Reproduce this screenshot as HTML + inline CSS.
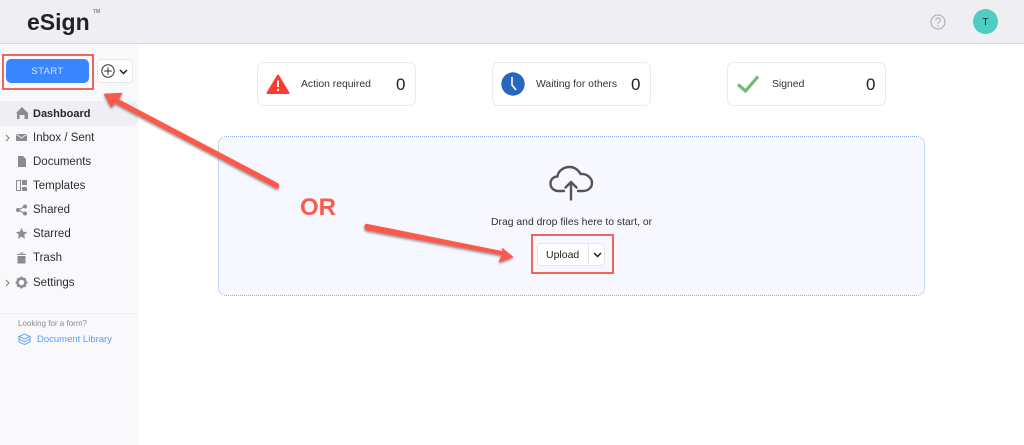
<!DOCTYPE html>
<html><head><meta charset="utf-8"><style>
html,body{margin:0;padding:0;width:1024px;height:445px;overflow:hidden;background:#fff;font-family:"Liberation Sans",sans-serif;color:#222}
div,span{position:absolute;white-space:nowrap;box-sizing:border-box}
svg{position:absolute;overflow:visible}
.n{left:33px;font-size:11.5px;line-height:16px;color:#2d2d33}
.card{top:62px;width:159px;height:44px;border:1px solid #ececf0;border-radius:6px;background:#fff}
.lab{font-size:10.4px;line-height:14px;color:#333;top:78px}
.num{font-size:17px;line-height:20px;color:#222;top:75px}
</style></head><body>
<div style="left:0;top:0;width:1024px;height:44px;background:#eeeef3;border-bottom:1px solid #d9d9de"></div>
<div style="left:27px;top:6px;font-size:23px;line-height:32px;font-weight:bold;color:#222">eSign</div>
<div style="left:93px;top:9px;font-size:5px;line-height:7px;color:#555">TM</div>
<svg style="left:930px;top:14px" width="16" height="16" viewBox="0 0 16 16"><circle cx="8" cy="8" r="7" fill="none" stroke="#a8a8ac" stroke-width="1"/><path d="M5.8 6.2a2.2 2.2 0 1 1 3.4 1.8c-.8.5-1.2 1-1.2 1.8" fill="none" stroke="#a8a8ac" stroke-width="1"/><circle cx="8" cy="12" r=".7" fill="#a8a8ac"/></svg>
<div style="left:973px;top:9px;width:25px;height:25px;border-radius:50%;background:#4ecdc4;text-align:center;font-size:10px;line-height:27px;color:#222">T</div>

<div style="left:0;top:44px;width:138px;height:401px;background:#f9f9fc"></div>
<div style="left:0;top:101px;width:138px;height:25px;background:#efeff3;border-radius:0 6px 6px 0"></div>
<div style="left:6px;top:59px;width:83px;height:24px;background:#3a86ff;border-radius:5px;text-align:center;color:#cfe0fb;font-size:9.500px;line-height:26px;letter-spacing:.4px">START</div>
<div style="left:2px;top:54px;width:92px;height:36px;border:2px solid #f0645a"></div>
<div style="left:97px;top:59px;width:36px;height:24px;background:#fff;border:1px solid #e8e8ec;border-radius:4px"></div>
<svg style="left:101px;top:64px" width="14" height="14" viewBox="0 0 14 14"><circle cx="7" cy="7" r="6.2" fill="none" stroke="#333" stroke-width="1"/><path d="M7 3.2v7.6M3.2 7h7.6" stroke="#333" stroke-width="1"/></svg>
<svg style="left:119px;top:69px" width="9" height="6" viewBox="0 0 9 6"><path d="M1 1l3.5 3.5L8 1" fill="none" stroke="#222" stroke-width="1.5"/></svg>

<div class="n" style="top:106px;font-weight:bold;font-size:11px;color:#26262b">Dashboard</div>
<div class="n" style="top:130px">Inbox / Sent</div>
<div class="n" style="top:154px">Documents</div>
<div class="n" style="top:178px">Templates</div>
<div class="n" style="top:202px">Shared</div>
<div class="n" style="top:226px">Starred</div>
<div class="n" style="top:250px">Trash</div>
<div class="n" style="top:275px">Settings</div>

<svg style="left:0;top:0" width="32" height="300" viewBox="0 0 32 300" fill="#8c8c90">
<path d="M16 114l6-6 6 6v6h-3.500v-4h-5v4H17v-6z" transform="translate(0 -1)"/>
<path d="M6 135l3 3-3 3M6 280l3 3-3 3" fill="none" stroke="#777" stroke-width=".9"/>
<rect x="16" y="134" width="11" height="7" rx="1"/><path d="M16.500 134.500l5 3.500 5-3.500" stroke="#f9f9fc" stroke-width=".8" fill="none"/>
<path d="M18 156h5l3 3v8h-8z"/>
<path d="M16 180h5v11h-5z M17 181v9h3v-9z M22 180h5v5h-5z M22 187h5v4h-5z" fill-rule="evenodd"/>
<circle cx="18" cy="210" r="2"/><circle cx="25" cy="206.500" r="2"/><circle cx="25" cy="213.500" r="2"/><path d="M18 210l7-3.500M18 210l7 3.500" stroke="#8c8c90"/>
<path d="M21.500 228l1.700 3.600 3.900.5-2.900 2.700.8 3.900-3.500-2-3.500 2 .8-3.900-2.900-2.700 3.900-.5z"/>
<path d="M17 254h9v1h-9z M19.500 252.500h4v1h-4z M17.500 256h8v7.500h-8z"/>
<circle cx="21.500" cy="282.500" r="4" fill="none" stroke="#8c8c90" stroke-width="2.500"/><path d="M21.500 276.500v2M21.500 286.500v2M15.500 282.500h2M25.500 282.500h2M17.300 278.300l1.400 1.400M24.300 285.300l1.400 1.400M17.300 286.700l1.400-1.400M24.300 279.700l1.400-1.400" stroke="#8c8c90" stroke-width="1.800"/>
</svg>

<div style="left:0;top:313px;width:138px;height:1px;background:#eeeef2"></div>
<div style="left:18px;top:318px;font-size:8px;line-height:11px;color:#8a8a90">Looking for a form?</div>
<div style="left:37px;top:333px;font-size:9.500px;line-height:13px;color:#5b9bf5">Document Library</div>
<svg style="left:18px;top:333px" width="13" height="13" viewBox="0 0 13 13" fill="none" stroke="#6aa5f7" stroke-width="1"><path d="M6.500 1l5.500 2.500-5.500 2.500L1 3.500z"/><path d="M1 6.200l5.500 2.500L12 6.200M1 9l5.500 2.500L12 9"/><path d="M1 3.500V9M12 3.500V9"/></svg>

<div class="card" style="left:257px"></div>
<svg style="left:266px;top:74px" width="24" height="20" viewBox="0 0 24 20"><path d="M12 1.500L22.500 19h-21z" fill="#ff3b30" stroke="#ff3b30" stroke-width="2" stroke-linejoin="round"/><path d="M12 6.500v6.500" stroke="#fff" stroke-width="2"/><circle cx="12" cy="16" r="1.200" fill="#fff"/></svg>
<div class="lab" style="left:301px">Action required</div>
<div class="num" style="left:396px">0</div>

<div class="card" style="left:492px"></div>
<svg style="left:501px;top:72px" width="24" height="24" viewBox="0 0 24 24"><circle cx="12" cy="12" r="11.700" fill="#2a66bd"/><path d="M11 5v8l4 5" fill="none" stroke="#fff" stroke-width="1.600"/></svg>
<div class="lab" style="left:536px">Waiting for others</div>
<div class="num" style="left:631px">0</div>

<div class="card" style="left:727px"></div>
<svg style="left:736px;top:74px" width="24" height="20" viewBox="0 0 24 20"><path d="M2 10.500l7.500 6.500L22 2.500" fill="none" stroke="#6fbb78" stroke-width="3.200"/></svg>
<div class="lab" style="left:772px">Signed</div>
<div class="num" style="left:866px">0</div>

<div style="left:218px;top:136px;width:707px;height:160px;background:#f7f8ff;border:1px dotted #8fb4f0;border-radius:8px"></div>
<svg style="left:549px;top:165px" width="45" height="36" viewBox="0 0 45 36" fill="none" stroke="#545458" stroke-width="2.400" stroke-linecap="round" stroke-linejoin="round"><path d="M15 26H9.500C4.500 26 1.500 22.500 1.500 18.500 1.500 14.500 4.500 11.500 8.500 11.500 9 6 14.500 2 20.500 2c5 0 9 3 11 7 6.500-.5 11.500 4 11.500 9S38.500 26 34 26h-5"/><path d="M22 34.500V17M16.500 22.500l5.500-5.500 5.500 5.500"/></svg>
<div style="left:491px;top:216px;font-size:10.400px;line-height:14px;color:#2f2f33">Drag and drop files here to start, or</div>
<div style="left:537px;top:243px;width:68px;height:23px;background:#fff;border:1px solid #e6e6ea;border-radius:4px"></div>
<div style="left:588px;top:243px;width:1px;height:23px;background:#e6e6ea"></div>
<div style="left:546px;top:247.500px;font-size:10.500px;line-height:15px;color:#222">Upload</div>
<svg style="left:593px;top:252px" width="9" height="6" viewBox="0 0 9 6"><path d="M1 1l3.500 3.500L8 1" fill="none" stroke="#222" stroke-width="1.500"/></svg>
<div style="left:531px;top:234px;width:83px;height:40px;border:2px solid #f0645a"></div>

<div style="left:300px;top:193px;font-size:24px;line-height:30px;font-weight:bold;color:#fb5a4c">OR</div>

<svg style="left:0;top:0" width="1024" height="445" viewBox="0 0 1024 445">
<defs><filter id="s" x="-20%" y="-20%" width="140%" height="140%"><feDropShadow dx="0" dy="1.500" stdDeviation="1.200" flood-color="#000" flood-opacity=".45"/></filter></defs>
<g filter="url(#s)" fill="#fb5a4c">
<path d="M104 94L122 93 118.500 99.500 278 183.500Q280 186 277 188.500L115 103 111 107z" stroke="#fb5a4c" stroke-width=".6" stroke-linejoin="round"/>
<path d="M513 257L499 262 502 255 366 230Q363 227 366 224L503 251.500 502 248z" stroke="#fb5a4c" stroke-width=".6" stroke-linejoin="round"/>
</g></svg>
</body></html>
